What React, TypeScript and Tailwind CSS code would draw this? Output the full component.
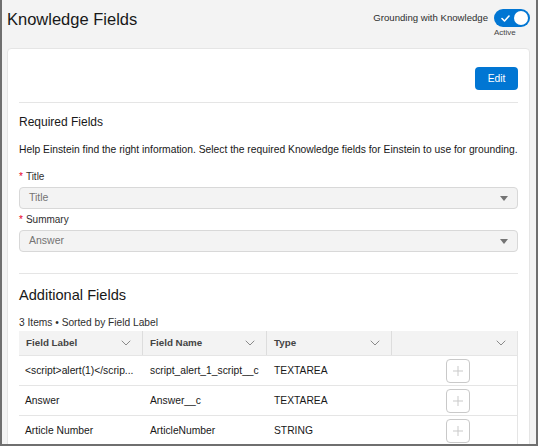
import React from "react";

const Chevron = () => (
  <svg width="10" height="6" viewBox="0 0 10 6" fill="none" className="shrink-0">
    <path d="M1 1l4 4 4-4" stroke="#8a8a8a" strokeWidth="1" strokeLinecap="round" strokeLinejoin="round" />
  </svg>
);

const Caret = () => (
  <svg width="8" height="5" viewBox="0 0 8 5" className="shrink-0">
    <path d="M0 0h8L4 5z" fill="#747474" />
  </svg>
);

const PlusBtn = () => (
  <div className="w-[24px] h-[24px] rounded-[4px] border border-[#c9c9c9] bg-white flex items-center justify-center">
    <svg width="10" height="10" viewBox="0 0 10 10">
      <path d="M5 0v10M0 5h10" stroke="#c9c9c9" strokeWidth="1" />
    </svg>
  </div>
);

const Field = ({ label, value, first }: { label: string; value: string; first?: boolean }) => (
  <div className={first ? "mt-[14px]" : "mt-[5px]"}>
    <div className="h-[12px] leading-[12px] text-[10px] text-[#2e2e2e] flex items-center">
      <span className="text-[#ea001e] mr-[3px] text-[10px]">*</span>
      {label}
    </div>
    <div className="mt-[4px] h-[22px] rounded-[4px] border border-[#d8d8d8] bg-[#f3f3f3] flex items-center justify-between pl-[9px] pr-[9px]">
      <span className="text-[10.5px] text-[#747474]">{value}</span>
      <Caret />
    </div>
  </div>
);

const rows = [
  { label: "<script>alert(1)</scrip...", name: "script_alert_1_script__c", type: "TEXTAREA" },
  { label: "Answer", name: "Answer__c", type: "TEXTAREA" },
  { label: "Article Number", name: "ArticleNumber", type: "STRING" },
];

export default function App() {
  return (
    <div className="w-[538px] h-[446px] overflow-hidden bg-[#f3f3f3] border-l-2 border-r-2 border-b-2 border-[#6f6f6f] font-['Liberation_Sans',Arial,sans-serif] text-[#181818]">
      {/* Header */}
      <div className="h-[48px] flex items-start justify-between pl-[5px] pr-[6px]">
        <div className="mt-[9px] text-[16.5px] leading-[20px] text-[#181818]">Knowledge Fields</div>
        <div className="flex items-start mt-[9px]">
          <div className="text-[9.6px] leading-[18px] text-[#2e2e2e] mr-[6px]">Grounding with Knowledge</div>
          <div className="flex flex-col items-start">
            <div className="w-[36px] h-[18px] rounded-full bg-[#0176d3] flex items-center justify-between pl-[7px] pr-[2px]">
              <svg width="9" height="7" viewBox="0 0 9 7" fill="none">
                <path d="M1 3.5l2.5 2.5L8 1" stroke="white" strokeWidth="1.6" strokeLinecap="round" strokeLinejoin="round" />
              </svg>
              <div className="w-[14px] h-[14px] rounded-full bg-white" />
            </div>
            <div className="mt-[1px] text-[8px] leading-[10px] text-[#444]">Active</div>
          </div>
        </div>
      </div>

      {/* Card */}
      <div className="ml-[5px] mr-[6px] bg-white border border-[#e5e5e5] rounded-t-[4px] px-[11px] pt-[18px] h-[420px]">
        <div className="flex justify-end">
          <div className="w-[43px] h-[23px] rounded-[4px] bg-[#0176d3] text-white text-[10.3px] flex items-center justify-center">Edit</div>
        </div>
        <div className="mt-[12px] h-px bg-[#e5e5e5]" />
        <div className="mt-[11px] text-[12px] leading-[16px]">Required Fields</div>
        <div className="mt-[13px] text-[10.3px] leading-[14px] whitespace-nowrap">
          Help Einstein find the right information. Select the required Knowledge fields for Einstein to use for grounding.
        </div>
        <Field label="Title" value="Title" first />
        <Field label="Summary" value="Answer" />
        <div className="mt-[21px] h-px bg-[#e5e5e5]" />
        <div className="mt-[12px] text-[14.6px] leading-[18px]">Additional Fields</div>
        <div className="mt-[13px] text-[10.2px] leading-[12px] text-[#2e2e2e]">3 Items • Sorted by Field Label</div>

        <div className="mt-[2px] border-r border-[#e5e5e5]">
          <div className="grid grid-cols-[124px_124px_125px_1fr] h-[25px] bg-[#f3f3f3] border-b border-[#e5e5e5]">
            {["Field Label", "Field Name", "Type", ""].map((h, i) => (
              <div key={i} className={`flex items-center justify-between pl-[7px] pr-[11px] ${i < 3 ? "border-r border-[#dddddd]" : ""}`}>
                <span className="text-[9.8px] font-bold text-[#444]">{h}</span>
                <Chevron />
              </div>
            ))}
          </div>
          {rows.map((r, i) => (
            <div key={i} className="grid grid-cols-[124px_124px_125px_1fr] h-[30px] border-b border-[#e5e5e5] text-[10.3px] text-[#181818]">
              <div className="flex items-center pl-[6px] whitespace-nowrap overflow-hidden">{r.label}</div>
              <div className="flex items-center pl-[7px] whitespace-nowrap">{r.name}</div>
              <div className="flex items-center pl-[7px]">{r.type}</div>
              <div className="flex items-center justify-center pl-[6px]">
                <PlusBtn />
              </div>
            </div>
          ))}
        </div>
      </div>
    </div>
  );
}
